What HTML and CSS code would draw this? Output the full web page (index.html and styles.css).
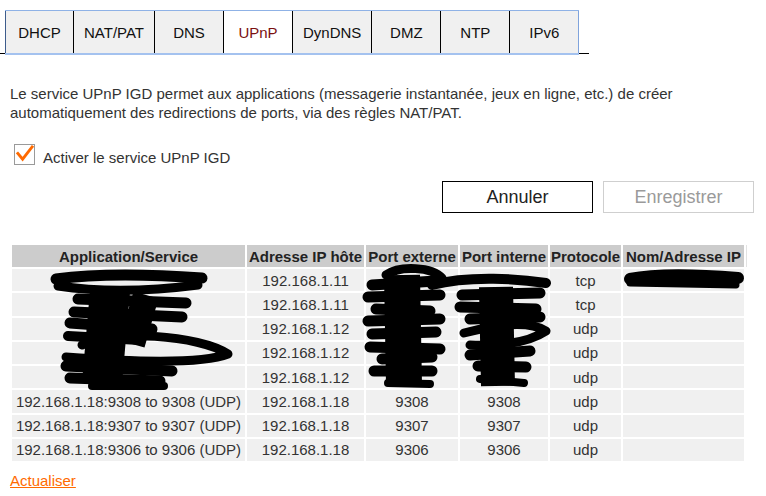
FILE: index.html
```html
<!DOCTYPE html>
<html lang="fr">
<head>
<meta charset="utf-8">
<title>UPnP</title>
<link rel="stylesheet" href="styles.css">
</head>
<body>
<div class="tabbar">
  <span class="edge edge-left"></span>
  <div class="tabs">
    <a class="tab first">DHCP</a>
    <a class="tab">NAT/PAT</a>
    <a class="tab">DNS</a>
    <a class="tab active">UPnP</a>
    <a class="tab">DynDNS</a>
    <a class="tab">DMZ</a>
    <a class="tab">NTP</a>
    <a class="tab last">IPv6</a>
  </div>
  <span class="edge edge-right"></span>
</div>

<p class="intro">Le service UPnP IGD permet aux applications (messagerie instantanée, jeux en ligne, etc.) de créer automatiquement des redirections de ports, via des règles NAT/PAT.</p>

<label class="check-row">
  <span class="checkbox">
    <svg viewBox="0 0 20 20" width="20" height="20"><path d="M3 9.5 L8 15.5 L18 2.5" fill="none" stroke="#ff6a00" stroke-width="3" stroke-linecap="square" stroke-linejoin="miter"/></svg>
  </span>
  <span class="check-label">Activer le service UPnP IGD</span>
</label>

<div class="actions">
  <button class="btn btn-cancel">Annuler</button>
  <button class="btn btn-save" disabled>Enregistrer</button>
</div>

<div class="table-wrap">
  <table class="rules">
    <colgroup>
      <col class="c-app"><col class="c-ip"><col class="c-ext"><col class="c-int"><col class="c-proto"><col class="c-name"><col class="c-end">
    </colgroup>
    <thead>
      <tr><th>Application/Service</th><th>Adresse IP hôte</th><th>Port externe</th><th>Port interne</th><th>Protocole</th><th>Nom/Adresse IP</th><th class="end"></th></tr>
    </thead>
    <tbody>
      <tr><td></td><td>192.168.1.11</td><td></td><td></td><td>tcp</td><td></td></tr>
      <tr><td></td><td>192.168.1.11</td><td></td><td></td><td>tcp</td><td></td></tr>
      <tr><td></td><td>192.168.1.12</td><td></td><td></td><td>udp</td><td></td></tr>
      <tr><td></td><td>192.168.1.12</td><td></td><td></td><td>udp</td><td></td></tr>
      <tr><td></td><td>192.168.1.12</td><td></td><td></td><td>udp</td><td></td></tr>
      <tr><td>192.168.1.18:9308 to 9308 (UDP)</td><td>192.168.1.18</td><td>9308</td><td>9308</td><td>udp</td><td></td></tr>
      <tr><td>192.168.1.18:9307 to 9307 (UDP)</td><td>192.168.1.18</td><td>9307</td><td>9307</td><td>udp</td><td></td></tr>
      <tr><td>192.168.1.18:9306 to 9306 (UDP)</td><td>192.168.1.18</td><td>9306</td><td>9306</td><td>udp</td><td></td></tr>
    </tbody>
  </table>
  <svg class="redact" viewBox="10 244 756 220" width="756" height="220" aria-hidden="true">
    <g fill="none" stroke="#000" stroke-linecap="round" stroke-linejoin="round">
      <!-- application column -->
      <path stroke-width="11" d="M56 280 C100 274 160 276 202 279"/>
      <path stroke-width="9" d="M58 287 Q120 296 198 286"/>
      <path stroke-width="11" d="M78 300 L186 304"/>
      <path stroke-width="11" d="M74 313 L182 318"/>
      <path stroke-width="11" d="M70 324 L152 330"/>
      <path stroke-width="10" d="M68 337 L140 341"/>
      <path stroke-width="9" d="M82 346 C110 330 200 336 228 355 C200 366 120 362 66 358"/>
      <path stroke-width="11" d="M66 367 L172 372"/>
      <path stroke-width="11" d="M70 379 L160 382"/>
      <path stroke-width="8" d="M92 387 L164 387"/>
      <path stroke-width="40" stroke-linecap="butt" d="M110 292 L102 384"/>
      <path stroke-width="26" stroke-linecap="butt" d="M146 296 L132 345"/>
      <!-- port externe -->
      <path stroke-width="9" d="M386 276 C400 266 432 268 442 279"/>
      <path stroke-width="11" d="M372 286 L436 282"/>
      <path stroke-width="11" d="M368 298 L440 296"/>
      <path stroke-width="11" d="M376 310 L430 312"/>
      <path stroke-width="11" d="M368 322 L440 320"/>
      <path stroke-width="11" d="M372 335 L436 333"/>
      <path stroke-width="11" d="M370 348 L440 350"/>
      <path stroke-width="11" d="M382 360 L432 358"/>
      <path stroke-width="11" d="M374 372 L432 372"/>
      <path stroke-width="8" d="M388 384 L430 385"/>
      <path stroke-width="36" stroke-linecap="butt" d="M402 276 L404 386"/>
      <!-- port interne -->
      <path stroke-width="10" d="M432 286 C470 276 520 280 546 284"/>
      <path stroke-width="11" d="M462 296 L540 294"/>
      <path stroke-width="11" d="M460 308 L536 310"/>
      <path stroke-width="11" d="M470 320 L540 318"/>
      <path stroke-width="9" d="M464 334 Q524 318 546 332 Q522 348 470 346"/>
      <path stroke-width="11" d="M470 356 L530 352"/>
      <path stroke-width="11" d="M478 367 L526 368"/>
      <path stroke-width="8" d="M480 380 L524 384"/>
      <path stroke-width="34" stroke-linecap="butt" d="M496 288 L498 387"/>
      <!-- nom -->
      <path stroke-width="12" d="M630 280 C660 274 700 276 738 279"/>
      <path stroke-width="7" d="M630 284 L736 286"/>
    </g>
  </svg>
</div>

<a class="refresh" href="#">Actualiser</a>
</body>
</html>
```

FILE: styles.css
```css
html, body {
  margin: 0;
  padding: 0;
  background: #fff;
}
body {
  font-family: "Liberation Sans", Arial, sans-serif;
  font-size: 15px;
  color: #333;
}

.tabbar {
  display: flex;
  align-items: flex-end;
  padding-top: 10px;
}
.edge {
  display: block;
  height: 0;
  border-bottom: 1px solid #000;
  margin-bottom: 1px;
}
.edge-left { width: 5px; }
.edge-right { width: 10px; }
.tabs {
  display: flex;
  border-top: 1px solid #8fb2e6;
  border-bottom: 2px solid #a4c2ef;
}
.tab {
  display: flex;
  align-items: center;
  justify-content: center;
  box-sizing: border-box;
  height: 42px;
  min-width: 69px;
  padding: 0 10px;
  background: #f0f0f0;
  color: #111;
  font-size: 15px;
  border-left: 1px solid #000;
  cursor: pointer;
}
.tab.first { border-left-color: #3d5c8c; min-width: 68px; }
.tab.last { border-right: 1px solid #7fa3dc; min-width: 70px; }
.tab.active {
  background: #fff;
  color: #7a1010;
}

.intro {
  margin: 29px 0 0;
  padding: 0 10px;
  line-height: 19px;
  color: #333;
}

.check-row {
  display: flex;
  align-items: center;
  gap: 8px;
  margin: 20px 0 0 14px;
}
.checkbox {
  display: flex;
  align-items: center;
  justify-content: center;
  box-sizing: border-box;
  width: 21px;
  height: 21px;
  border: 1px solid #9a9a9a;
  background: #fff;
}
.check-label {
  margin-top: 7px;
  line-height: 17px;
}

.actions {
  display: flex;
  justify-content: flex-end;
  gap: 10px;
  padding-right: 12px;
  margin-top: 15px;
}
.btn {
  box-sizing: border-box;
  width: 151px;
  height: 32px;
  background: #fff;
  font-family: "Liberation Sans", Arial, sans-serif;
  font-size: 18px;
  padding: 0;
}
.btn-cancel {
  border: 1px solid #000;
  color: #222;
}
.btn-save {
  border: 1px solid #cfcfcf;
  color: #9a9a9a;
}

.table-wrap {
  position: relative;
  margin: 30px 0 0 10px;
  width: 756px;
}
.rules {
  border-collapse: separate;
  border-spacing: 2px;
  table-layout: fixed;
}
.c-app { width: 233px; }
.c-ip { width: 117px; }
.c-ext { width: 92px; }
.c-int { width: 88px; }
.c-proto { width: 71px; }
.c-name { width: 121px; }
.c-end { width: 1px; }
.rules th,
.rules td {
  height: 22px;
  padding: 0;
  text-align: center;
  white-space: nowrap;
  overflow: hidden;
  font-size: 15px;
}
.rules td {
  height: 22.25px;
}
.rules th {
  background: #cccccc;
  color: #222;
  font-weight: bold;
}
.rules th.end {
  background: #e2e2e2;
}
.rules td {
  background: #f0f0f0;
  color: #333;
}
.redact {
  position: absolute;
  left: 0;
  top: 0;
  pointer-events: none;
}

.refresh {
  display: inline-block;
  margin: 9px 0 0 10px;
  color: #ff6a00;
  text-decoration: underline;
  line-height: 17px;
}
```
